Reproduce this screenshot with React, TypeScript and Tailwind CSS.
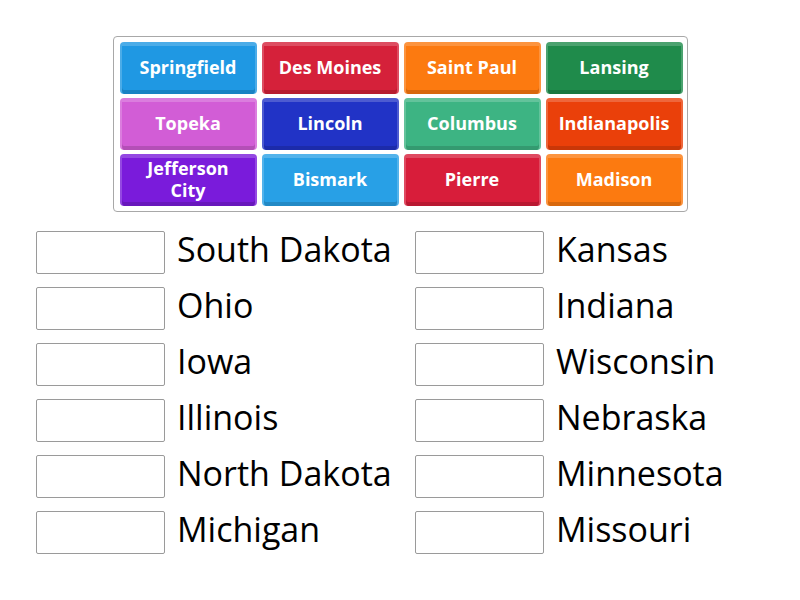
const tiles = [
  { label: 'Springfield', bg: 'bg-[#1f98e3]' },
  { label: 'Des Moines', bg: 'bg-[#d5213a]' },
  { label: 'Saint Paul', bg: 'bg-[#fc7a10]' },
  { label: 'Lansing', bg: 'bg-[#1f8b4b]' },
  { label: 'Topeka', bg: 'bg-[#d25dd6]' },
  { label: 'Lincoln', bg: 'bg-[#2133c6]' },
  { label: 'Columbus', bg: 'bg-[#3db483]' },
  { label: 'Indianapolis', bg: 'bg-[#ea400a]' },
  { label: 'Jefferson City', bg: 'bg-[#7a1bdb]' },
  { label: 'Bismark', bg: 'bg-[#28a0e6]' },
  { label: 'Pierre', bg: 'bg-[#d81d3a]' },
  { label: 'Madison', bg: 'bg-[#fc7a10]' },
];

const left = ['South Dakota', 'Ohio', 'Iowa', 'Illinois', 'North Dakota', 'Michigan'];
const right = ['Kansas', 'Indiana', 'Wisconsin', 'Nebraska', 'Minnesota', 'Missouri'];

function Row({ name }: { name: string }) {
  return (
    <div className="flex items-center h-[43px]">
      <div className="w-[129px] h-[43px] border border-[#9a9a9a] rounded-[2px] bg-white shrink-0" />
      <span className="ml-[12px] text-[34px] leading-none text-black -mt-[7px]">{name}</span>
    </div>
  );
}

export default function App() {
  return (
    <div className="w-[800px] h-[600px] bg-white font-['Open_Sans',sans-serif] pt-[36px]">
      {/* Tiles */}
      <div className="mx-auto w-[575px] border border-[#a8a8a8] rounded-[4px] p-[5px] pl-[6px]">
        <div className="grid grid-cols-[repeat(4,137px)] gap-x-[5px] gap-y-[4px]">
          {tiles.map((t) => (
            <div
              key={t.label}
              className={`${t.bg} h-[52px] rounded-[4px] border-x-[2px] border-t-[4px] border-b-0 border-white/20 shadow-[inset_0_-4px_0_rgba(0,0,0,0.14)] flex items-center justify-center text-center text-white font-bold text-[18px] leading-[22px] px-[12px] pb-[6px]`}
            >
              {t.label}
            </div>
          ))}
        </div>
      </div>

      {/* Matching rows */}
      <div className="grid grid-cols-[379px_379px] ml-[36px] mt-[19px]">
        <div className="flex flex-col gap-[13px]">
          {left.map((n) => (
            <Row key={n} name={n} />
          ))}
        </div>
        <div className="flex flex-col gap-[13px]">
          {right.map((n) => (
            <Row key={n} name={n} />
          ))}
        </div>
      </div>
    </div>
  );
}
